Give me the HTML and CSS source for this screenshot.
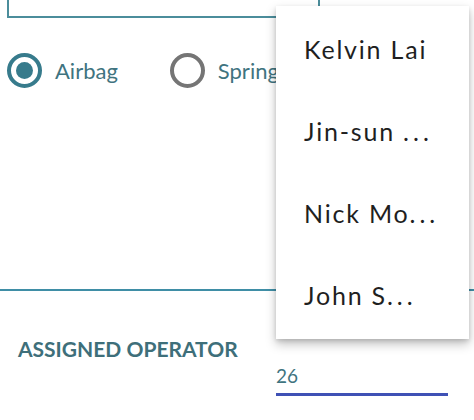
FILE: index.html
```html
<!DOCTYPE html>
<html lang="en">
<head>
<meta charset="utf-8">
<link rel="stylesheet" href="styles.css">
</head>
<body>
<div class="page">
  <div class="textbox"></div>
  <div class="radios">
    <label class="radio">
      <span class="dot on"></span>
      <span class="rlabel">Airbag</span>
    </label>
    <label class="radio">
      <span class="dot"></span>
      <span class="rlabel">Spring</span>
    </label>
  </div>
  <div class="divider"></div>
  <div class="field-row">
    <div class="field-label">ASSIGNED OPERATOR</div>
    <div class="field">
      <div class="value">26</div>
      <div class="bar"></div>
    </div>
  </div>
</div>
<ul class="menu">
  <li>Kelvin Lai</li>
  <li>Jin-sun <span class="dots">...</span></li>
  <li>Nick Mo<span class="dots">...</span></li>
  <li>John S<span class="dots">...</span></li>
</ul>
</body>
</html>
```
FILE: styles.css
```css
html, body {
  margin: 0;
  padding: 0;
  background: #ffffff;
}
body {
  width: 474px;
  height: 420px;
  overflow: hidden;
  position: relative;
  font-family: Lato, "Noto Sans", sans-serif;
}
.page {
  display: flex;
  flex-direction: column;
}
.textbox {
  margin-left: 7px;
  width: 309px;
  height: 16px;
  border: 2px solid #4b8d9b;
  border-top: none;
}
.radios {
  display: flex;
  align-items: center;
  margin-top: 35px;
  padding-left: 7px;
  height: 35px;
}
.radio {
  display: flex;
  align-items: center;
}
.radio + .radio {
  margin-left: 52px;
}
.dot {
  box-sizing: border-box;
  width: 35px;
  height: 35px;
  border-radius: 50%;
  border: 4px solid #757575;
  display: flex;
  align-items: center;
  justify-content: center;
}
.dot.on {
  border-color: #377b8c;
}
.dot.on::after {
  content: "";
  width: 17px;
  height: 17px;
  border-radius: 50%;
  background: #377b8c;
}
.rlabel {
  margin-left: 13px;
  font-size: 22px;
  color: #3f7480;
}
.divider {
  margin-top: 201px;
  height: 2px;
  background: #3f8ea6;
}
.field-row {
  display: flex;
  padding-top: 47px;
}
.field-label {
  width: 258px;
  padding-left: 18px;
  font-size: 21px;
  font-weight: 700;
  color: #3e6f7a;
  line-height: 22px;
  white-space: nowrap;
}
.field {
  width: 172px;
  padding-top: 27px;
}
.value {
  font-size: 19px;
  line-height: 22px;
  color: #3f7480;
}
.bar {
  margin-top: 6px;
  height: 3px;
  background: #3f51b5;
}
.menu {
  position: absolute;
  left: 276px;
  top: 6px;
  width: 193px;
  margin: 0;
  padding: 2px 0 3px;
  list-style: none;
  background: #ffffff;
  box-shadow: 0 5px 10px rgba(0,0,0,0.25), 0 2px 4px rgba(0,0,0,0.12);
}
.menu li {
  height: 82px;
  display: flex;
  align-items: center;
  padding-left: 28px;
  font-size: 25px;
  letter-spacing: 1.8px;
  color: #1f1f1f;
  white-space: pre;
}
.dots {
  letter-spacing: 4px;
}
```
